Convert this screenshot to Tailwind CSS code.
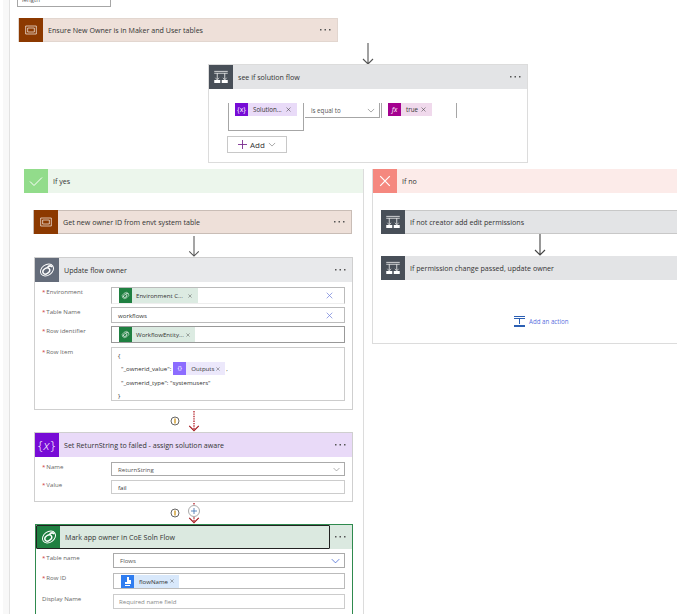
<!DOCTYPE html>
<html>
<head>
  <meta charset="UTF-8">
  <title>Flow designer</title>
  <script src="https://cdn.jsdelivr.net/npm/@tailwindcss/browser@4"></script>
</head>
<body class="bg-white">
  <svg class="hidden">
    <symbol id="scope" viewBox="0 0 24 24"><path d="M4 6h16v12H4zM7 9h10v6H7z" fill="none" stroke="#fff" stroke-width="1"/></symbol>
    <symbol id="cond" viewBox="0 0 24 24"><path d="M3 4.500h18M3 7h18M7 7v8M17 7v8" fill="none" stroke="#fff" stroke-width="1"/><path d="M3 16h8v4H3zM13 16h8v4h-8z" fill="#fff"/><path d="M4.500 13l2.500 3 2.500-3M14.500 13l2.500 3 2.500-3" fill="none" stroke="#fff" stroke-width=".8"/></symbol>
    <symbol id="dv" viewBox="0 0 24 24"><g fill="none" stroke="#fff" transform="rotate(-35 12 12)"><ellipse cx="12" cy="12" rx="9.500" ry="7" stroke-width="1.300"/><ellipse cx="10.500" cy="12.500" rx="5" ry="3.500" stroke-width="1.800"/><path d="M15 9c3 0 5 2 5 4" stroke-width="2"/></g></symbol>
    <symbol id="chev" viewBox="0 0 12 8"><path d="M1 1.500l5 5 5-5" fill="none" stroke="currentColor" stroke-width="1"/></symbol>
    <symbol id="arrow" viewBox="0 0 12 22"><path d="M6 0v21M1 16l5 5 5-5" fill="none" stroke="currentColor" stroke-width="1.100"/></symbol>
    <symbol id="x" viewBox="0 0 10 10"><path d="M1 1l8 8M9 1l-8 8" fill="none" stroke="currentColor" stroke-width="1"/></symbol>
    <symbol id="info" viewBox="0 0 10 10"><circle cx="5" cy="5" r="4" fill="none" stroke="#666" stroke-width="1"/><path d="M5 2.500v5" stroke="#c98a00" stroke-width="1.200"/></symbol>
    <symbol id="redarrow" viewBox="0 0 12 22"><path d="M6 0v20" stroke="#b5222a" stroke-width="1.400" stroke-dasharray="1.500 1" fill="none"/><path d="M1 15.500l5 5 5-5" fill="none" stroke="#a4161c" stroke-width="1.200"/></symbol>
    <symbol id="dots" viewBox="0 0 11 2"><path d="M0 0h1.500v1.500H0zM4.500 0H6v1.500H4.500zM9 0h1.500v1.500H9z" fill="#555"/></symbol>
  </svg>

  <div class="relative w-[677px] h-[614px] overflow-hidden font-['Open_Sans',sans-serif] text-[7.1px] text-[#333] whitespace-nowrap">
    <!-- gutter on the left -->
    <div class="absolute left-[3px] top-0 w-[7px] h-full bg-[#f8f8f8] border-r border-[#e2e2e2]"></div>

    <div class="absolute left-[17px] -top-[8px] w-[94px] h-[15px] border border-[#a6a6a6] bg-white pl-1 text-[6.100px] leading-[13px] text-[#555]">length</div>

    <!-- outer scope -->
    <div class="flex items-center absolute left-[18px] top-[18px] w-[320px] h-[24px] bg-[#eee0d9] border border-[#e2d6cf]">
      <div class="flex items-center justify-center w-[24px] h-[24px] bg-[#8c3900] shrink-0"><svg class="w-[16px] h-[16px]"><use href="#scope"/></svg></div>
      <span class="ml-[5px] flex-1 pt-[1px]">Ensure New Owner is in Maker and User tables</span>
      <svg class="w-[11px] h-[2px] mr-[6px]"><use href="#dots"/></svg>
    </div>

    <svg class="absolute left-[362px] top-[43px] w-[12px] h-[22px] text-[#555]"><use href="#arrow"/></svg>

    <!-- condition -->
    <div class="absolute left-[208px] top-[64px] w-[320px] h-[99px] border border-[#dcdcdc] bg-white">
      <div class="flex items-center h-[24px] bg-[#e3e4e6]">
        <div class="flex items-center justify-center w-[24px] h-[24px] bg-[#484f58] shrink-0"><svg class="w-[18px] h-[18px]"><use href="#cond"/></svg></div>
        <span class="ml-[5px] flex-1 pt-[1px]">see if solution flow</span>
        <svg class="w-[11px] h-[2px] mr-[6px]"><use href="#dots"/></svg>
      </div>
      <div class="flex mt-[14px] ml-[19px] items-start text-[6.200px]">
        <div class="w-[76px] h-[28px] border-x border-b border-[#a6a6a6] pl-[6px]">
          <div class="flex items-center w-[62px] h-[13px] bg-[#e9dbf8]">
            <span class="flex items-center justify-center shrink-0 w-[13px] h-[13px] bg-[#770bd6] text-white text-[7px] leading-none">{x}</span>
            <span class="ml-[5px] flex-1 pt-[1px]">Solution...</span>
            <svg class="w-[5px] h-[5px] mr-[6px] shrink-0"><use href="#x"/></svg>
          </div>
        </div>
        <div class="flex items-center ml-[1px] w-[75px] h-[15px] border-r border-b border-[#a6a6a6] pl-[6px] pr-[2px] text-[#555]">
          <span class="flex-1 pt-[1px]">is equal to</span>
          <svg class="w-[8px] h-[5px] mr-[2px] text-[#777]"><use href="#chev"/></svg>
        </div>
        <div class="flex ml-[1px] w-[76px] h-[15px] border-x border-[#a6a6a6] pl-[6px]">
          <div class="flex items-center w-[44px] h-[13px] bg-[#f0d9ec]">
            <span class="flex items-center justify-center shrink-0 w-[13px] h-[13px] bg-[#a4018f] text-white text-[7px] italic leading-none">fx</span>
            <span class="ml-[5px] flex-1 pt-[1px]">true</span>
            <svg class="w-[5px] h-[5px] mr-[6px] shrink-0"><use href="#x"/></svg>
          </div>
        </div>
      </div>
      <div class="flex items-center justify-center gap-[3px] ml-[18px] mt-[5px] w-[60px] h-[17px] border border-[#c8c8c8] text-[8px]">
        <svg class="w-[9px] h-[9px]" viewBox="0 0 10 10"><path d="M5 0v10M0 5h10" stroke="#7b2d8e" stroke-width="1" fill="none"/></svg>
        <span>Add</span>
        <svg class="w-[8px] h-[5px] text-[#777]"><use href="#chev"/></svg>
      </div>
    </div>

    <!-- If yes -->
    <div class="absolute left-[24px] top-[169px] w-[340px] h-[445px] border-r border-[#dcdcdc]">
      <div class="flex items-center h-[24px] bg-[#ecf6ec]">
        <div class="flex items-center justify-center w-[24px] h-[24px] bg-[#92dc8b] shrink-0"><svg class="w-[14px] h-[14px]" viewBox="0 0 14 14"><path d="M1 7.500l4 4 8-8" fill="none" stroke="#fff" stroke-width="1"/></svg></div>
        <span class="ml-[5px] pt-[1px]">If yes</span>
      </div>
    </div>

    <!-- left branch cards -->
    <div class="absolute left-[33px] top-[210px] flex items-center w-[319px] h-[24px] bg-[#eee0d9] border border-[#c9bdb6]">
      <div class="flex items-center justify-center w-[24px] h-[24px] bg-[#8c3900] shrink-0"><svg class="w-[16px] h-[16px]"><use href="#scope"/></svg></div>
      <span class="ml-[5px] flex-1 pt-[1px]">Get new owner ID from envt system table</span>
      <svg class="w-[11px] h-[2px] mr-[6px]"><use href="#dots"/></svg>
    </div>
    <svg class="absolute left-[188px] top-[236px] w-[12px] h-[21px] text-[#555]"><use href="#arrow"/></svg>

    <div class="absolute left-[34px] top-[257px] w-[319px] h-[153px] border border-[#cfcfcf] bg-white">
      <div class="flex items-center h-[24px] bg-[#e8e9eb]">
        <div class="flex items-center justify-center w-[24px] h-[24px] bg-[#646c7a] shrink-0"><svg class="w-[18px] h-[18px]"><use href="#dv"/></svg></div>
        <span class="ml-[5px] flex-1 pt-[1px]">Update flow owner</span>
        <svg class="w-[11px] h-[2px] mr-[6px]"><use href="#dots"/></svg>
      </div>
      <div class="flex flex-col gap-[3px] mt-[5px] pl-[7px] pr-[7px] text-[6.100px]">
        <div class="flex h-[17px]">
          <span class="w-[69px] text-[#666]"><b class="text-[#c33] font-normal mr-[1px]">*</b>Environment</span>
          <div class="flex items-center flex-1 border-x border-y border-[#bbb] border-b-[#eee] pl-[7px] pr-[11px]">
            <div class="flex items-center w-[79px] h-[15px] bg-[#dcebe2]">
              <span class="flex items-center justify-center shrink-0 w-[13px] h-[15px] bg-[#1f8041]"><svg class="w-[9px] h-[9px]"><use href="#dv"/></svg></span>
              <span class="ml-[4px] flex-1 pt-[1px]">Environment C...</span>
              <svg class="w-[4px] h-[4px] mr-[6px] shrink-0"><use href="#x"/></svg>
            </div>
            <svg class="w-[7px] h-[7px] ml-auto text-[#6f7fd8]"><use href="#x"/></svg>
          </div>
        </div>
        <div class="flex h-[16px]">
          <span class="w-[69px] text-[#666]"><b class="text-[#c33] font-normal mr-[1px]">*</b>Table Name</span>
          <div class="flex items-center flex-1 border border-[#bbb] pl-[6px] pr-[11px]">
            <span class="flex-1 pt-[1px]">workflows</span>
            <svg class="w-[7px] h-[7px] text-[#6f7fd8]"><use href="#x"/></svg>
          </div>
        </div>
        <div class="flex h-[17px]">
          <span class="w-[69px] text-[#666]"><b class="text-[#c33] font-normal mr-[1px]">*</b>Row identifier</span>
          <div class="flex items-center flex-1 border border-[#999] pl-[7px]">
            <div class="flex items-center w-[76px] h-[15px] bg-[#dcebe2]">
              <span class="flex items-center justify-center shrink-0 w-[13px] h-[15px] bg-[#1f8041]"><svg class="w-[9px] h-[9px]"><use href="#dv"/></svg></span>
              <span class="ml-[4px] flex-1 pt-[1px]">WorkflowEntity...</span>
              <svg class="w-[4px] h-[4px] mr-[5px] shrink-0"><use href="#x"/></svg>
            </div>
          </div>
        </div>
        <div class="flex h-[54px] mt-[1px]">
          <span class="w-[69px] text-[#666]"><b class="text-[#c33] font-normal mr-[1px]">*</b>Row Item</span>
          <div class="flex-1 border border-[#ccc] pl-[6px] pt-[1px] leading-[13.300px]">
            <div>{</div>
            <div class="flex items-center pl-[3px]">
              <span>"_ownerid_value":</span>
              <span class="flex items-center w-[52px] h-[13px] ml-[2px] bg-[#ece8fb]">
                <span class="flex items-center justify-center shrink-0 w-[13px] h-[13px] bg-[#8c6cff] text-white text-[6px]">{}</span>
                <span class="ml-[5px] flex-1">Outputs</span>
                <svg class="w-[4px] h-[4px] mr-[5px] shrink-0"><use href="#x"/></svg>
              </span>
              <span class="ml-[1px]">,</span>
            </div>
            <div class="pl-[3px]">"_ownerid_type": "systemusers"</div>
            <div>}</div>
          </div>
        </div>
      </div>
    </div>

    <!-- connector, run after failed -->
    <svg class="absolute left-[170px] top-[416px] w-[10px] h-[10px]"><use href="#info"/></svg>
    <svg class="absolute left-[188px] top-[411px] w-[12px] h-[21px]"><use href="#redarrow"/></svg>

    <div class="absolute left-[34px] top-[432px] w-[319px] h-[70px] border border-[#cfcfcf] bg-white">
      <div class="flex items-center h-[24px] bg-[#e9daf8]">
        <div class="flex items-center justify-center w-[24px] h-[24px] bg-[#770bd6] shrink-0 text-white text-[13px] font-light leading-none tracking-[1px]">{<i>x</i>}</div>
        <span class="ml-[5px] flex-1 pt-[1px]">Set ReturnString to failed - assign solution aware</span>
        <svg class="w-[11px] h-[2px] mr-[6px]"><use href="#dots"/></svg>
      </div>
      <div class="flex flex-col gap-[4px] mt-[5px] pl-[7px] pr-[7px] text-[6.100px]">
        <div class="flex h-[14px]">
          <span class="w-[69px] text-[#666]"><b class="text-[#c33] font-normal mr-[1px]">*</b>Name</span>
          <div class="flex items-center flex-1 border border-[#aaa] pl-[6px] pr-[4px] text-[#555]">
            <span class="flex-1 pt-[1px]">ReturnString</span>
            <svg class="w-[7px] h-[5px] text-[#777]"><use href="#chev"/></svg>
          </div>
        </div>
        <div class="flex h-[14px]">
          <span class="w-[69px] text-[#666]"><b class="text-[#c33] font-normal mr-[1px]">*</b>Value</span>
          <div class="flex items-center flex-1 border border-[#ccc] pl-[6px] pt-[1px]">fail</div>
        </div>
      </div>
    </div>

    <!-- connector with plus -->
    <svg class="absolute left-[170px] top-[508px] w-[10px] h-[10px]"><use href="#info"/></svg>
    <svg class="absolute left-[188px] top-[503px] w-[12px] h-[21px]"><use href="#redarrow"/></svg>
    <div class="absolute left-[188px] top-[505px] flex items-center justify-center w-[12px] h-[12px] rounded-full border border-[#aaa] bg-white"><svg class="w-[6px] h-[6px]" viewBox="0 0 6 6"><path d="M3 0v6M0 3h6" stroke="#3a6fb0" stroke-width="0.800" fill="none"/></svg></div>

    <div class="absolute left-[35px] top-[524px] w-[318px] h-[100px] border border-[#2f8a4e] bg-white">
      <div class="flex items-center h-[24px] bg-[#dbe9e0]">
        <div class="flex items-center w-[294px] h-[24px] border border-[#222] rounded-[1px]">
          <div class="flex items-center justify-center w-[23px] h-[22px] bg-[#1f8041] shrink-0"><svg class="w-[18px] h-[18px]"><use href="#dv"/></svg></div>
          <span class="ml-[5px] pt-[1px]">Mark app owner in CoE Soln Flow</span>
        </div>
        <svg class="w-[11px] h-[2px] ml-auto mr-[6px]"><use href="#dots"/></svg>
      </div>
      <div class="flex flex-col gap-[5px] mt-[4px] pl-[6px] pr-[7px] text-[6.100px]">
        <div class="flex h-[15px]">
          <span class="w-[71px] text-[#666]"><b class="text-[#c33] font-normal mr-[1px]">*</b>Table name</span>
          <div class="flex items-center flex-1 border border-[#aaa] pl-[6px] pr-[4px] text-[#555]">
            <span class="flex-1 pt-[1px]">Flows</span>
            <svg class="w-[9px] h-[6px] text-[#3a5fd0]"><use href="#chev"/></svg>
          </div>
        </div>
        <div class="flex h-[16px]">
          <span class="w-[71px] text-[#666]"><b class="text-[#c33] font-normal mr-[1px]">*</b>Row ID</span>
          <div class="flex items-center flex-1 border border-[#bbb] pl-[7px]">
            <div class="flex items-center w-[58px] h-[13px] bg-[#d8e8fb]">
              <span class="flex items-center justify-center shrink-0 w-[13px] h-[13px] bg-[#2f7df0]"><svg class="w-[7px] h-[9px]" viewBox="0 0 7 9"><path d="M3 0h2v3h2v4H1V5h2zM1 8h5v1H1z" fill="#fff"/></svg></span>
              <span class="ml-[5px] flex-1 pt-[1px]">flowName</span>
              <svg class="w-[4px] h-[4px] mr-[5px] shrink-0"><use href="#x"/></svg>
            </div>
          </div>
        </div>
        <div class="flex h-[15px]">
          <span class="w-[71px] text-[#666]">Display Name</span>
          <div class="flex items-center flex-1 border border-[#ccc] pl-[5px] pt-[1px] text-[#888]">Required name field</div>
        </div>
      </div>
    </div>

    <!-- If no -->
    <div class="absolute left-[372px] top-[169px] w-[310px] h-[175px] border-b border-l border-[#dcdcdc] bg-white">
      <div class="flex items-center h-[24px] bg-[#fcebe9]">
        <div class="flex items-center justify-center w-[24px] h-[24px] bg-[#f5887f] shrink-0"><svg class="w-[12px] h-[12px] text-white"><use href="#x"/></svg></div>
        <span class="ml-[5px] pt-[1px]">If no</span>
      </div>
      <div class="flex items-center ml-[8px] mt-[17px] h-[24px] bg-[#e3e4e6] border-y border-[#c8c8c8]">
        <div class="flex items-center justify-center w-[24px] h-[24px] bg-[#484f58] shrink-0"><svg class="w-[18px] h-[18px]"><use href="#cond"/></svg></div>
        <span class="ml-[5px] pt-[1px]">If not creator add edit permissions</span>
      </div>
      <svg class="ml-[161px] w-[12px] h-[22px] text-[#444]"><use href="#arrow"/></svg>
      <div class="flex items-center ml-[8px] h-[24px] bg-[#e3e4e6]">
        <div class="flex items-center justify-center w-[24px] h-[24px] bg-[#484f58] shrink-0"><svg class="w-[18px] h-[18px]"><use href="#cond"/></svg></div>
        <span class="ml-[5px] pt-[1px]">If permission change passed, update owner</span>
      </div>
      <div class="flex items-center gap-[4px] ml-[141px] mt-[36px] text-[6.200px] text-[#5a6fe0]">
        <svg class="w-[11px] h-[11px]" viewBox="0 0 11 11"><path d="M0 .500h11M0 2.500h11M5.500 3v5" stroke="#2b5fb3" fill="none"/><path d="M0 9h11v2H0z" fill="#2b5fb3"/></svg>
        <span>Add an action</span>
      </div>
    </div>
  </div>
</body>
</html>
